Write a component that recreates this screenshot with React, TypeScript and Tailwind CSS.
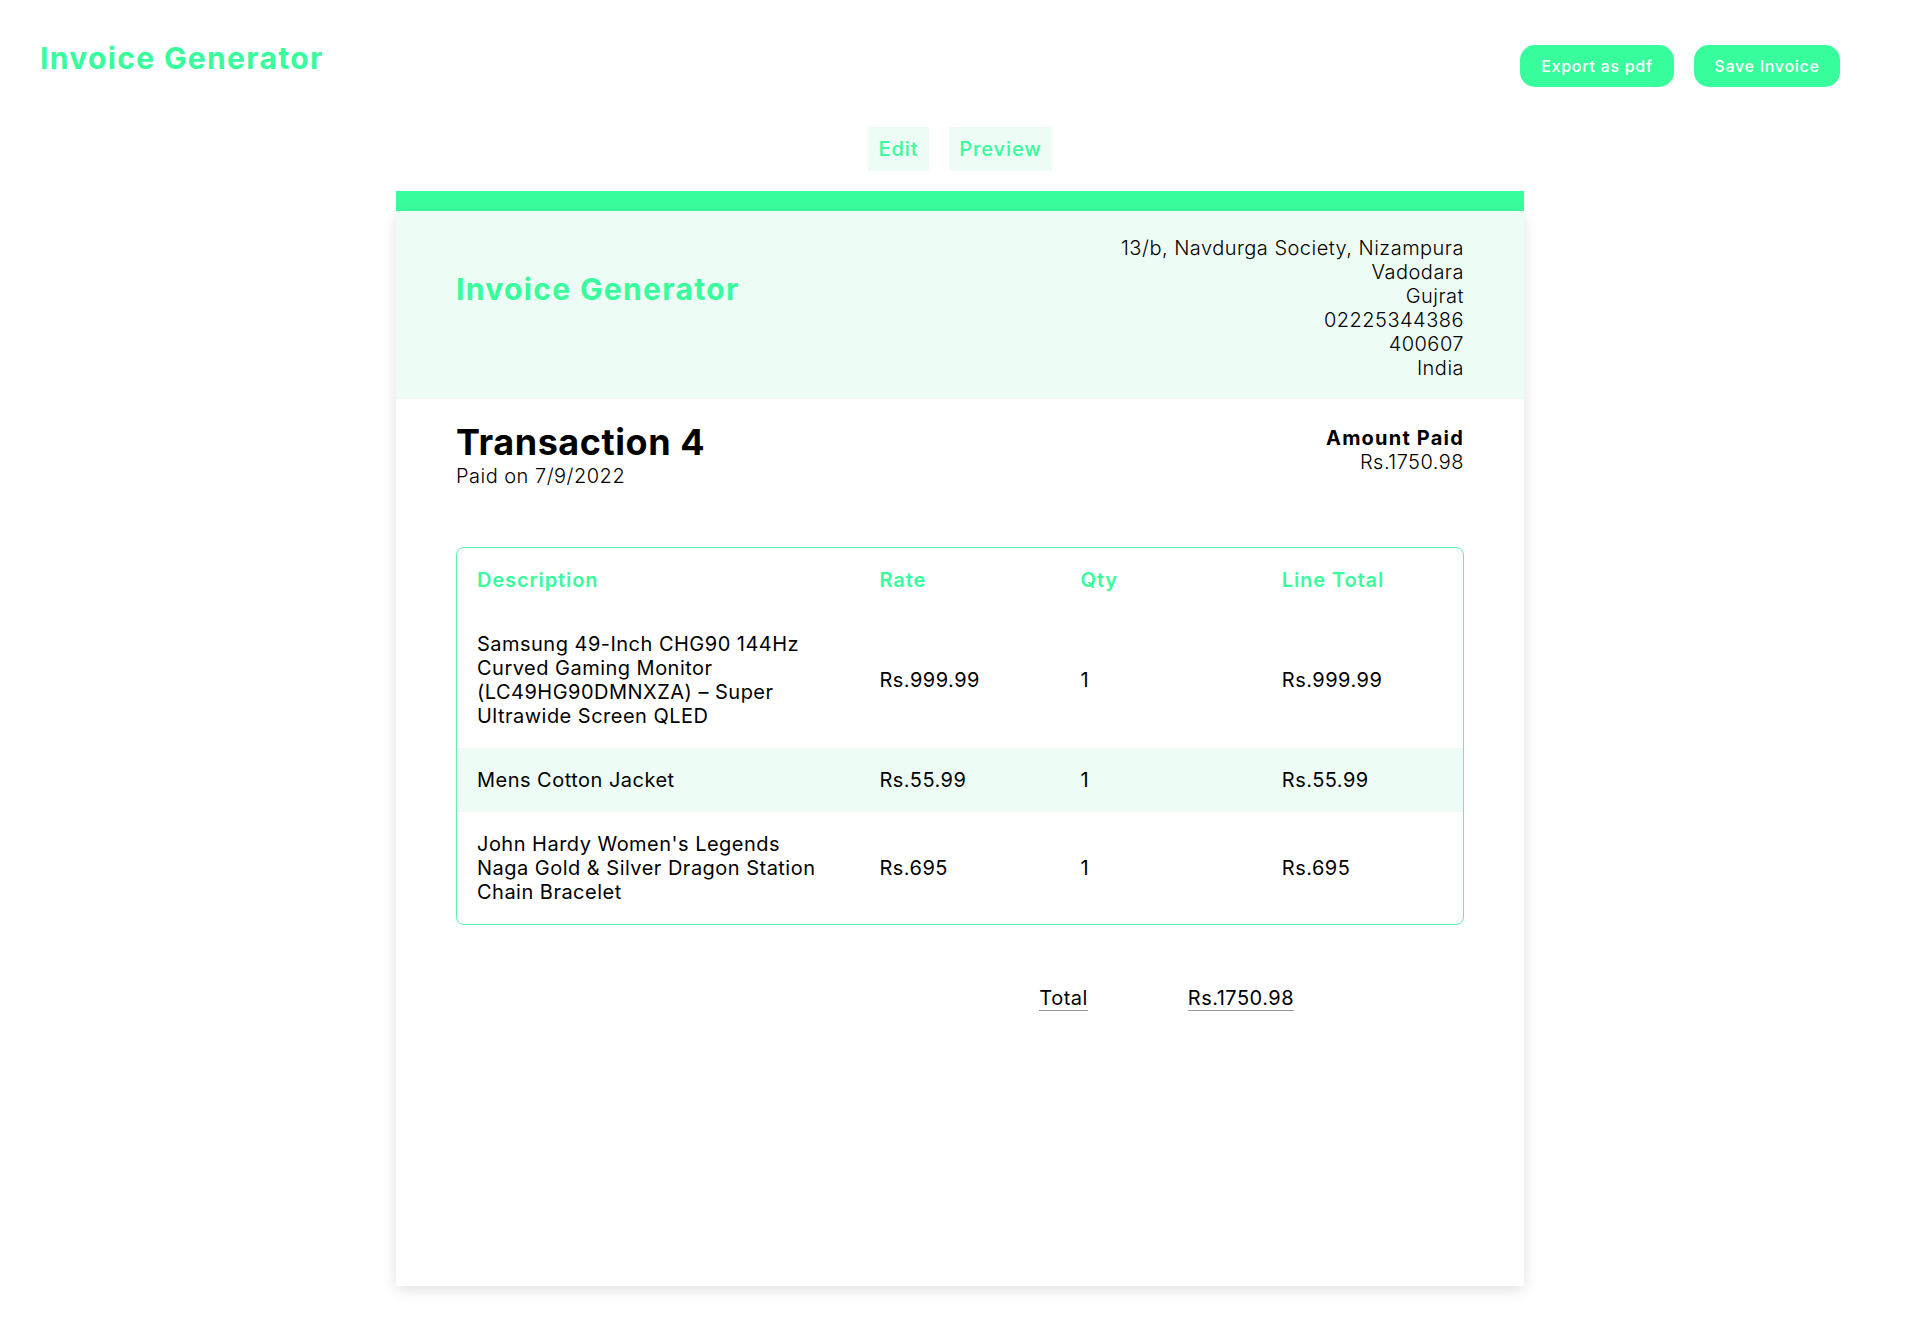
import React from "react";

const rows = [
  {
    desc: ["Samsung 49-Inch CHG90 144Hz", "Curved Gaming Monitor", "(LC49HG90DMNXZA) – Super", "Ultrawide Screen QLED"],
    rate: "Rs.999.99",
    qty: "1",
    total: "Rs.999.99",
  },
  { desc: ["Mens Cotton Jacket"], rate: "Rs.55.99", qty: "1", total: "Rs.55.99" },
  {
    desc: ["John Hardy Women's Legends", "Naga Gold & Silver Dragon Station", "Chain Bracelet"],
    rate: "Rs.695",
    qty: "1",
    total: "Rs.695",
  },
];

export default function App() {
  return (
    <div className="min-h-screen bg-white text-black font-['Inter','Liberation_Sans',sans-serif] tracking-[0.03em]">
      <div className="flex items-start justify-between pl-10 pr-20 pt-10">
        <h1 className="text-[30px] leading-[36px] font-bold tracking-[0.045em] text-[#38fd9c]">Invoice Generator</h1>
        <div className="mt-[5px] flex gap-5">
          <button className="h-[42px] w-[154px] rounded-[15px] bg-[#38fd9c] text-[16px] font-medium tracking-[0.045em] text-white">
            Export as pdf
          </button>
          <button className="h-[42px] w-[146px] rounded-[15px] bg-[#38fd9c] text-[16px] font-medium tracking-[0.045em] text-white">
            Save Invoice
          </button>
        </div>
      </div>

      <div className="mt-10 flex justify-center gap-5">
        <button className="flex h-[44px] w-[61px] items-center justify-center bg-[#edfcf5] text-[20px] font-medium tracking-[0.045em] text-[#38fd9c]">
          Edit
        </button>
        <button className="flex h-[44px] w-[103px] items-center justify-center bg-[#edfcf5] text-[20px] font-medium tracking-[0.045em] text-[#38fd9c]">
          Preview
        </button>
      </div>

      <div className="mx-auto mt-5 w-[1128px]">
        <div className="h-5 bg-[#38fd9c]" />
        <div className="h-[1075px] bg-white shadow-[0_4px_14px_rgba(0,0,0,0.12)]">
          <div className="flex items-start justify-between bg-[#edfcf5] px-[60px] pb-[19px] pt-[25px]">
            <div className="mt-[35px] text-[30px] font-bold leading-[36px] tracking-[0.045em] text-[#38fd9c]">
              Invoice Generator
            </div>
            <div className="text-right text-[20px] font-light leading-6">
              <div>13/b, Navdurga Society, Nizampura</div>
              <div>Vadodara</div>
              <div>Gujrat</div>
              <div>02225344386</div>
              <div>400607</div>
              <div>India</div>
            </div>
          </div>

          <div className="px-[60px] pt-[22px]">
            <div className="flex items-start justify-between">
              <div>
                <div className="text-[36px] font-bold leading-[43px] tracking-[0.015em]">Transaction 4</div>
                <div className="text-[20px] font-light leading-6">Paid on 7/9/2022</div>
              </div>
              <div className="pt-[5px] text-right text-[20px] leading-6">
                <div className="font-bold tracking-[0.06em]">Amount Paid</div>
                <div className="font-light">Rs.1750.98</div>
              </div>
            </div>

            <div className="mt-[59px] overflow-hidden rounded-lg border border-[#5ef2ac]">
              <table className="w-full table-fixed border-collapse text-left text-[20px] leading-6">
                <colgroup>
                  <col className="w-[40%]" />
                  <col className="w-[20%]" />
                  <col className="w-[20%]" />
                  <col className="w-[20%]" />
                </colgroup>
                <thead>
                  <tr className="text-[#38fd9c]">
                    <th className="px-5 py-5 font-semibold tracking-[0.045em]">Description</th>
                    <th className="px-5 py-5 font-semibold tracking-[0.045em]">Rate</th>
                    <th className="px-5 py-5 font-semibold tracking-[0.045em]">Qty</th>
                    <th className="px-5 py-5 font-semibold tracking-[0.045em]">Line Total</th>
                  </tr>
                </thead>
                <tbody>
                  {rows.map((r, i) => (
                    <tr key={i} className={i === 1 ? "bg-[#edfcf5]" : ""}>
                      <td className="px-5 py-5 align-middle">
                        {r.desc.map((l, j) => (
                          <div key={j} className="whitespace-nowrap">
                            {l}
                          </div>
                        ))}
                      </td>
                      <td className="px-5 py-5 align-middle">{r.rate}</td>
                      <td className="px-5 py-5 align-middle">{r.qty}</td>
                      <td className="px-5 py-5 align-middle">{r.total}</td>
                    </tr>
                  ))}
                </tbody>
              </table>
            </div>

            <div className="mt-[61px] flex justify-end gap-[100px] pr-[170px] text-[20px] leading-6">
              <span className="border-b border-[#999]">Total</span>
              <span className="border-b border-[#999]">Rs.1750.98</span>
            </div>
          </div>
        </div>
      </div>
    </div>
  );
}
